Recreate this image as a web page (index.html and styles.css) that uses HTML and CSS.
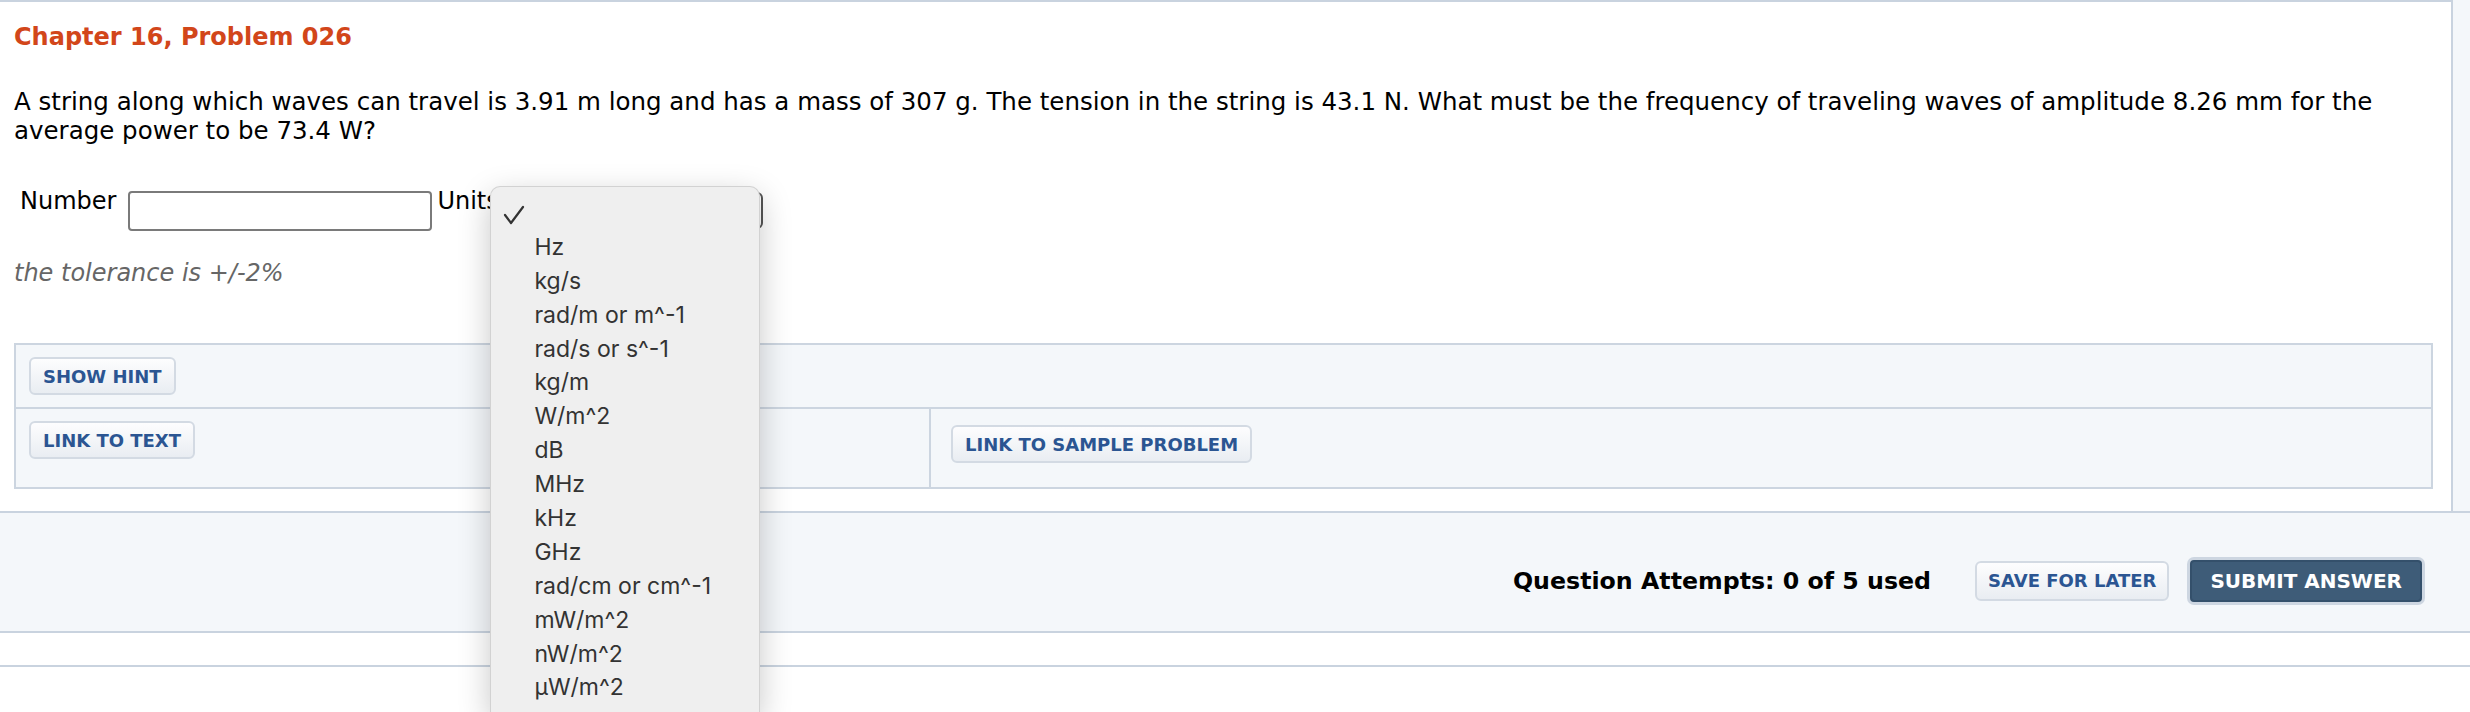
FILE: index.html
```html
<!DOCTYPE html>
<html lang="en">
<head>
    <meta charset="UTF-8">
    <title>Chapter 16, Problem 026</title>
    <link rel="stylesheet" href="styles.css">
</head>
<body>
    <div class="sheet">
        <div class="question">
            <h1 class="question-title">Chapter 16, Problem 026</h1>
            <p class="question-text">A string along which waves can travel is 3.91 m long and has a mass of 307 g. The tension in the string is 43.1 N. What must be the frequency of traveling waves of amplitude 8.26 mm for the average power to be 73.4 W?</p>

            <div class="answer-row">
                <label class="answer-label" for="number">Number</label>
                <input class="number-input" type="text" id="number">
                <div class="units">
                    <span class="answer-label">Units</span>
                    <div class="units-select"></div>

                    <!-- open native select popup -->
                    <ul class="units-menu">
                        <li class="checked">
                            <svg class="check" width="22" height="20" viewBox="0 0 22 20"><polyline points="2,10 8,18 20,2" fill="none" stroke="#333" stroke-width="2.2" stroke-linecap="round" stroke-linejoin="round"/></svg>
                            &nbsp;
                        </li>
                        <li>Hz</li>
                        <li>kg/s</li>
                        <li>rad/m or m^-1</li>
                        <li>rad/s or s^-1</li>
                        <li>kg/m</li>
                        <li>W/m^2</li>
                        <li>dB</li>
                        <li>MHz</li>
                        <li>kHz</li>
                        <li>GHz</li>
                        <li>rad/cm or cm^-1</li>
                        <li>mW/m^2</li>
                        <li>nW/m^2</li>
                        <li>µW/m^2</li>
                    </ul>
                </div>
            </div>

            <p class="tolerance">the tolerance is +/-2%</p>

            <div class="hints">
                <div class="hint-row">
                    <button class="btn">Show Hint</button>
                </div>
                <div class="hint-row hint-split">
                    <div class="hint-cell">
                        <button class="btn">Link to Text</button>
                    </div>
                    <div class="hint-cell hint-cell-right">
                        <button class="btn">Link to Sample Problem</button>
                    </div>
                </div>
            </div>
        </div>
    </div>

    <div class="footer">
        <span class="attempts">Question Attempts: 0 of 5 used</span>
        <button class="btn btn-save">Save for Later</button>
        <button class="btn btn-primary">Submit Answer</button>
    </div>
    <div class="bottom-rule"></div>
</body>
</html>
```

FILE: styles.css
```css
/* Global Styles */
html, body {
    min-height: 712px;
}

body {
    font-family: Verdana, "DejaVu Sans", sans-serif;
    font-size: 24px;
    color: #000;
    background-color: #fff;
    margin: 0;
    padding: 0;
    overflow: hidden;
}

.sheet {
    background-color: #f4f7fa;
}

/* Question card */
.question {
    background-color: #fff;
    border-top: 2px solid #c9d3df;
    border-right: 2px solid #c9d3df;
    margin-right: 17px;
    padding: 21px 18px 22px 14px;
}

.question-title {
    color: #d2461a;
    font-size: 24px;
    line-height: 29px;
    margin: 0;
}

.question-text {
    font-size: 24.5px;
    line-height: 29px;
    margin: 35px 0 0;
    max-width: 2425px;
}

/* Answer row */
.answer-row {
    display: flex;
    align-items: flex-start;
    margin-top: 42px;
    padding-left: 6px;
}

.answer-label {
    line-height: 29px;
}

.number-input {
    width: 304px;
    height: 40px;
    box-sizing: border-box;
    margin: 4px 5px 0 12px;
    border: 2px solid #7a7a7a;
    border-radius: 4px;
}

.units {
    position: relative;
    display: flex;
    align-items: flex-start;
}

.units-select {
    width: 258px;
    height: 37px;
    box-sizing: border-box;
    margin: 5px 0 0 6px;
    border: 2px solid #555;
    border-radius: 6px;
}

.units-menu {
    position: absolute;
    left: 53px;
    top: -1px;
    width: 270px;
    height: 527px;
    box-sizing: border-box;
    margin: 0;
    padding: 10px 0 0;
    list-style: none;
    background-color: #efefef;
    border: 1px solid #d2d2d2;
    border-bottom: none;
    border-radius: 10px 10px 0 0;
    box-shadow: 0 10px 32px rgba(0, 0, 0, 0.22);
    font-family: Inter, "Liberation Sans", sans-serif;
    font-size: 23px;
    color: #333;
    overflow: hidden;
}

.units-menu li {
    position: relative;
    height: 33.9px;
    line-height: 33.9px;
    padding-left: 43px;
}

.units-menu .check {
    position: absolute;
    left: 12px;
    top: 8px;
}

.tolerance {
    color: #666;
    font-style: italic;
    line-height: 29px;
    margin: 28px 0 0;
}

/* Hint table */
.hints {
    margin-top: 55px;
    background-color: #f4f7fa;
    border: 2px solid #ccd5e0;
}

.hint-row {
    padding: 12px 13px;
}

.hint-split {
    display: grid;
    grid-template-columns: 913px 1fr;
    border-top: 2px solid #ccd5e0;
    padding: 0;
    min-height: 78px;
}

.hint-cell {
    padding: 12px 13px;
}

.hint-cell-right {
    border-left: 2px solid #ccd5e0;
    padding: 16px 20px;
}

/* Buttons */
.btn {
    font-family: Verdana, "DejaVu Sans", sans-serif;
    font-size: 18px;
    font-weight: bold;
    text-transform: uppercase;
    color: #2b5592;
    height: 38px;
    padding: 0 12px;
    background: linear-gradient(#fdfdfe, #e9edf2);
    border: 2px solid #d3dae3;
    border-radius: 6px;
    cursor: pointer;
}

.btn-save {
    height: 40px;
    padding: 0 11px;
}

.btn-primary {
    color: #fff;
    background: #3e5c78;
    border: 2px solid #34506b;
    border-radius: 4px;
    height: 42px;
    padding: 0 18px;
    font-size: 20px;
    box-shadow: 0 0 0 3px #cdd6e1;
}

/* Footer */
.footer {
    display: flex;
    align-items: center;
    justify-content: flex-end;
    gap: 21px;
    height: 101px;
    padding: 17px 48px 0 0;
    background-color: #f4f7fa;
    border-top: 2px solid #c9d3df;
    border-bottom: 2px solid #c9d3df;
}

.attempts {
    font-weight: bold;
    font-size: 23.7px;
    margin-right: 23px;
}

.bottom-rule {
    margin-top: 32px;
    border-top: 2px solid #c9d3df;
}
```
